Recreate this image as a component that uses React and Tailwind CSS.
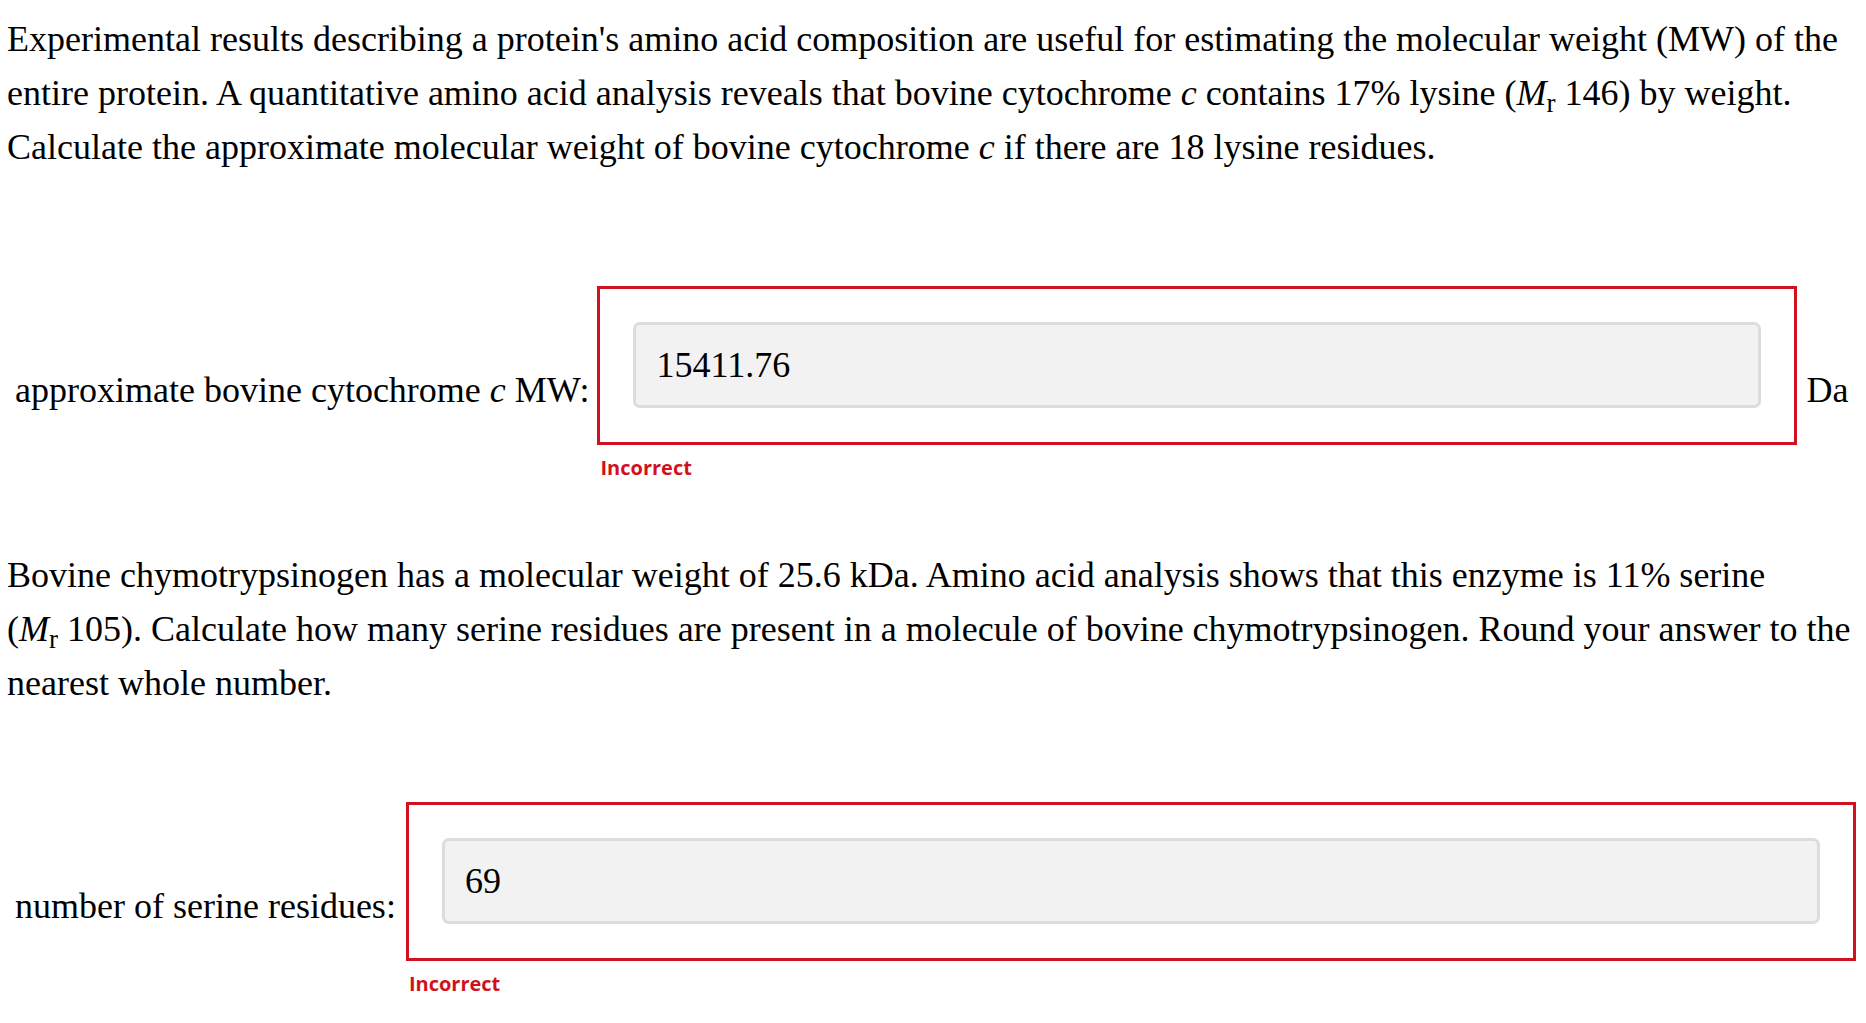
import React from "react";

function Mr() {
  return (
    <>
      <i>M</i>
      <sub className="not-italic">r</sub>
    </>
  );
}

function AnswerRow({ label, value, boxWidth, unit, mt, gap }) {
  return (
    <div className={`flex items-start pl-[15px] ${mt}`}>
      <div className="mt-[77px] whitespace-nowrap">{label}</div>
      <div className={`${gap} flex flex-col`}>
        <div
          className="h-[159px] border-[3px] border-[#d0111e] px-[33px] pt-[33px]"
          style={{ width: boxWidth }}
        >
          <div
            className="h-[86px] rounded-[7px] border-[3px] border-[#dcdcdc] bg-[#f2f2f2] pl-[20px] leading-[80px] whitespace-nowrap"
            style={{ fontFamily: '"Liberation Serif", "Times New Roman", serif' }}
          >
            {value}
          </div>
        </div>
        <div
          className="mt-[9px] pl-[3px] text-[20px] leading-[28px] font-bold text-[#d0111e]"
          style={{ fontFamily: '"Open Sans", "Noto Sans", sans-serif' }}
        >
          Incorrect
        </div>
      </div>
      {unit && <div className="ml-[9px] mt-[77px] whitespace-nowrap">{unit}</div>}
    </div>
  );
}

export default function App() {
  return (
    <div
      className="w-[1866px] h-[1023px] bg-white text-black text-[36px] leading-[54px] overflow-hidden"
      style={{ fontFamily: '"Liberation Serif", "Times New Roman", serif' }}
    >
      <p className="pl-[7px] pt-[12px] whitespace-nowrap">
        Experimental results describing a protein's amino acid composition are useful for estimating the molecular weight (MW) of the
        <br />
        entire protein. A quantitative amino acid analysis reveals that bovine cytochrome <i>c</i> contains 17% lysine (<Mr /> 146) by weight.
        <br />
        Calculate the approximate molecular weight of bovine cytochrome <i>c</i> if there are 18 lysine residues.
      </p>

      <AnswerRow
        label={
          <>
            approximate bovine cytochrome <i>c</i> MW:
          </>
        }
        value="15411.76"
        boxWidth="1200px"
        unit="Da"
        mt="mt-[112px]"
        gap="ml-[8px]"
      />

      <p className="pl-[7px] mt-[66px] whitespace-nowrap">
        Bovine chymotrypsinogen has a molecular weight of 25.6 kDa. Amino acid analysis shows that this enzyme is 11% serine
        <br />
        (<Mr /> 105). Calculate how many serine residues are present in a molecule of bovine chymotrypsinogen. Round your answer to the
        <br />
        nearest whole number.
      </p>

      <AnswerRow
        label="number of serine residues:"
        value="69"
        boxWidth="1450px"
        mt="mt-[92px]"
        gap="ml-[10px]"
      />
    </div>
  );
}
